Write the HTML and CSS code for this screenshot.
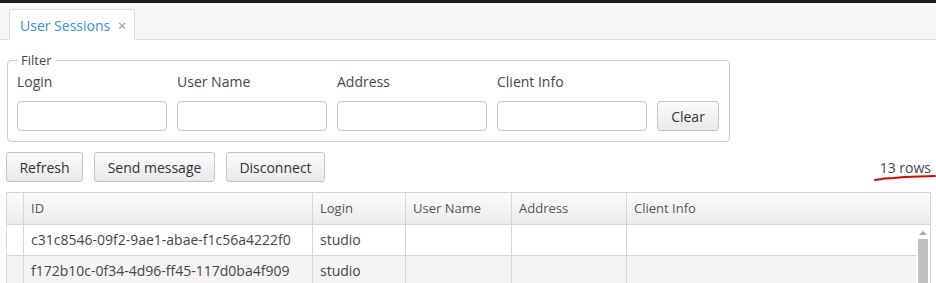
FILE: index.html
```html
<!DOCTYPE html>
<html lang="en">
<head>
    <meta charset="UTF-8">
    <title>User Sessions</title>
    <link rel="stylesheet" href="styles.css">
</head>
<body>
    <div class="topbar"></div>
    <div class="tabbar">
        <div class="tab">User Sessions <span class="tab-close">&times;</span></div>
    </div>
    <div class="content">
        <fieldset class="filter">
            <legend>Filter</legend>
            <div class="filter-row">
                <div class="field">
                    <label>Login</label>
                    <input type="text">
                </div>
                <div class="field">
                    <label>User Name</label>
                    <input type="text">
                </div>
                <div class="field">
                    <label>Address</label>
                    <input type="text">
                </div>
                <div class="field">
                    <label>Client Info</label>
                    <input type="text">
                </div>
                <button class="btn btn-clear">Clear</button>
            </div>
        </fieldset>

        <div class="toolbar">
            <button class="btn btn-refresh">Refresh</button>
            <button class="btn btn-send">Send message</button>
            <button class="btn btn-disconnect">Disconnect</button>
            <span class="rows-count">13 rows
                <svg class="scribble" width="62" height="8" viewBox="0 0 62 8">
                    <path d="M1 6 L8 5 L10 4.5 L20 4 L30 3 L45 2.5 L61 2" stroke="#e00000" stroke-width="2" fill="none" stroke-linecap="round"/>
                </svg>
            </span>
        </div>

        <div class="grid">
            <div class="grid-head">
                <div class="cell"></div>
                <div class="cell">ID</div>
                <div class="cell">Login</div>
                <div class="cell">User Name</div>
                <div class="cell">Address</div>
                <div class="cell">Client Info</div>
            </div>
            <div class="grid-body">
                <div class="rows">
                    <div class="row">
                        <div class="cell"></div>
                        <div class="cell">c31c8546-09f2-9ae1-abae-f1c56a4222f0</div>
                        <div class="cell">studio</div>
                        <div class="cell"></div>
                        <div class="cell"></div>
                        <div class="cell"></div>
                    </div>
                    <div class="row odd">
                        <div class="cell"></div>
                        <div class="cell">f172b10c-0f34-4d96-ff45-117d0ba4f909</div>
                        <div class="cell">studio</div>
                        <div class="cell"></div>
                        <div class="cell"></div>
                        <div class="cell"></div>
                    </div>
                </div>
                <div class="scrollbar">
                    <div class="scroll-arrow"></div>
                    <div class="scroll-thumb"></div>
                </div>
            </div>
        </div>
    </div>
</body>
</html>
```

FILE: styles.css
```css
body {
    margin: 0;
    font-family: "Open Sans", "Liberation Sans", sans-serif;
    font-size: 14px;
    color: #464646;
    background-color: #ffffff;
    overflow: hidden;
}

.topbar {
    height: 3px;
    background-color: #1e1e1e;
}

.tabbar {
    display: flex;
    align-items: flex-end;
    height: 36px;
    padding-left: 9px;
    background-color: #f6f6f6;
    border-bottom: 1px solid #dcdcdc;
}
.tab {
    height: 30px;
    line-height: 30px;
    margin-bottom: -1px;
    padding: 0 8px 0 10px;
    background-color: #ffffff;
    border: 1px solid #dcdcdc;
    border-bottom: none;
    border-radius: 3px 3px 0 0;
    color: #3b8de0;
}
.tab-close {
    margin-left: 4px;
    color: #999;
    font-size: 15px;
}

.content {
    padding: 0 5px 0 6px;
}

.filter {
    width: 723px;
    box-sizing: border-box;
    margin: 11px 0 0 1px;
    padding: 3px 9px 10px 9px;
    border: 1px solid #cccccc;
    border-radius: 4px;
}
.filter legend {
    padding: 0 4px;
    font-size: 13px;
}
.filter-row {
    display: flex;
    align-items: flex-end;
    gap: 10px;
}
.field {
    display: flex;
    flex-direction: column;
    gap: 10px;
}
.field label {
    line-height: 19px;
}
.field input {
    width: 150px;
    height: 30px;
    box-sizing: border-box;
    border: 1px solid #c8c8c8;
    border-radius: 4px;
    padding: 0 6px;
    font-family: inherit;
    font-size: 14px;
}

.btn {
    height: 30px;
    box-sizing: border-box;
    padding: 0;
    font-family: inherit;
    font-size: 14px;
    color: #333;
    background: linear-gradient(#fbfbfb, #e9e9e9);
    border: 1px solid #c4c4c4;
    border-radius: 3px;
}
.btn-clear { width: 62px; }
.btn-refresh { width: 77px; }
.btn-send { width: 121px; }
.btn-disconnect { width: 99px; }

.toolbar {
    display: flex;
    align-items: center;
    gap: 11px;
    margin-top: 10px;
}
.rows-count {
    position: relative;
    margin-left: auto;
    line-height: 19px;
}
.scribble {
    position: absolute;
    left: -6px;
    top: 16px;
}

.grid {
    width: 925px;
    box-sizing: border-box;
    margin-top: 10px;
    border: 1px solid #d5d5d5;
    border-bottom: none;
}
.grid-head,
.row {
    display: grid;
    grid-template-columns: 17px 289px 93px 106px 115px 1fr;
}
.grid-head {
    height: 31px;
    background: linear-gradient(#fbfbfb, #ececec);
    border-bottom: 1px solid #d5d5d5;
    font-size: 13px;
    color: #555;
}
.cell {
    padding-left: 7px;
    border-right: 1px solid #d5d5d5;
    line-height: 30px;
    white-space: nowrap;
    overflow: hidden;
}
.grid-head .cell {
    line-height: 31px;
}
.cell:first-child {
    padding-left: 0;
}
.cell:last-child {
    border-right: none;
}
.grid-body {
    display: flex;
}
.rows {
    flex: 1;
}
.row {
    height: 31px;
    box-sizing: border-box;
    border-bottom: 1px solid #d5d5d5;
}
.row.odd {
    background-color: #f4f4f4;
}
.scrollbar {
    width: 14px;
    display: flex;
    flex-direction: column;
    align-items: center;
    background-color: #ffffff;
}
.scroll-arrow {
    width: 0;
    height: 0;
    margin-top: 6px;
    border-left: 4px solid transparent;
    border-right: 4px solid transparent;
    border-bottom: 4px solid #a8a8a8;
}
.scroll-thumb {
    width: 10px;
    height: 60px;
    margin-top: 4px;
    background-color: #c1c1c1;
}
```
